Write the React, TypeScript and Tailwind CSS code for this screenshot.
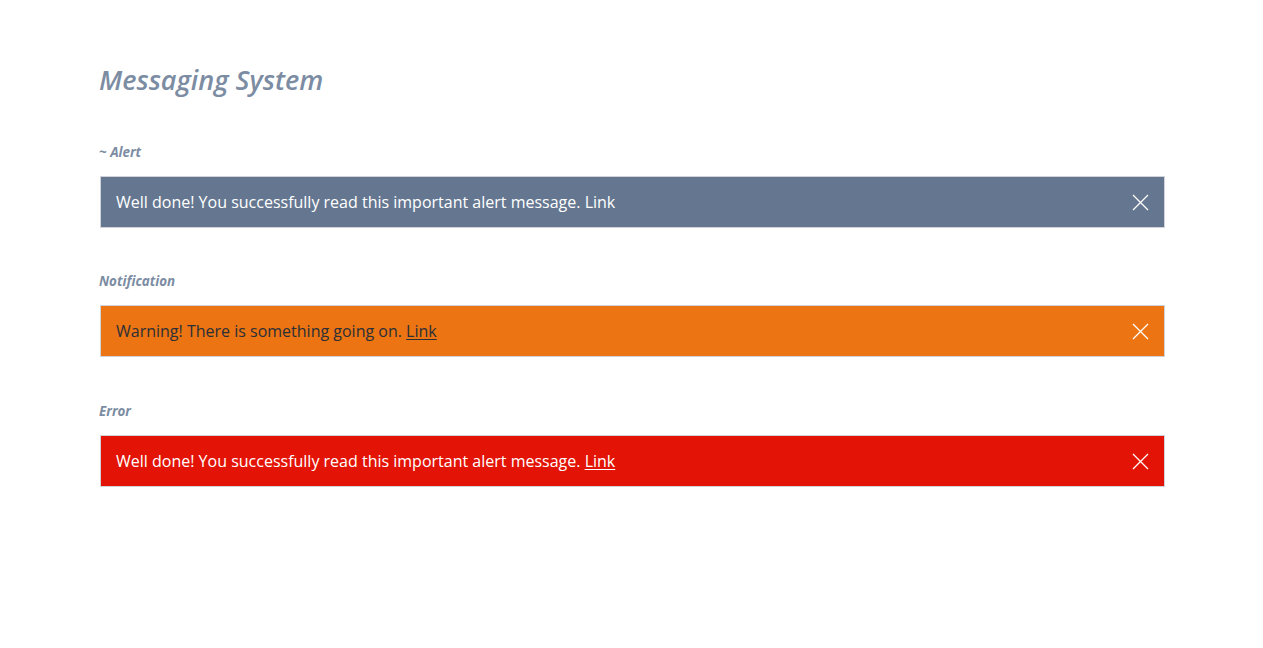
import React from "react";

type Variant = "alert" | "notification" | "error";

interface MessageBarProps {
  variant: Variant;
  text: string;
  underline?: boolean;
}

const VARIANTS: Record<Variant, string> = {
  alert: "bg-[#657790] text-white",
  notification: "bg-[#ec7412] text-[#2b2f38]",
  error: "bg-[#e31306] text-white",
};

function CloseIcon() {
  return (
    <svg width="17" height="17" viewBox="0 0 17 17" fill="none" stroke="white" strokeWidth="1.3">
      <path d="M1 1L16 16M16 1L1 16" />
    </svg>
  );
}

function MessageBar({ variant, text, underline }: MessageBarProps) {
  return (
    <div
      className={`flex h-[52px] items-center justify-between border border-[#d0d3d8] pl-[15px] pr-3 ${VARIANTS[variant]}`}
    >
      <p className="text-[16px] leading-6">
        {text}{" "}
        <a className={underline ? "underline underline-offset-2 decoration-1" : ""}>Link</a>
      </p>
      <button className="flex h-6 w-6 items-center justify-center">
        <CloseIcon />
      </button>
    </div>
  );
}

function SectionLabel({ children }: { children: React.ReactNode }) {
  return (
    <h3 className="-ml-px text-[13.4px] leading-[18px] font-bold italic text-[#7c8ca3]">
      {children}
    </h3>
  );
}

export default function App() {
  return (
    <div
      className="min-h-screen bg-white pl-[100px] pr-[98px] pt-[63px]"
      style={{ fontFamily: '"Open Sans", "Noto Sans", sans-serif' }}
    >
      <h1 className="-ml-px text-[27px] leading-[34px] font-semibold italic text-[#7c8ca3]">
        Messaging System
      </h1>

      <div className="mt-[46px] flex flex-col">
        <SectionLabel>~ Alert</SectionLabel>
        <div className="mt-[15px]">
          <MessageBar variant="alert" text="Well done! You successfully read this important alert message." />
        </div>

        <div className="mt-[44px]">
          <SectionLabel>Notification</SectionLabel>
        </div>
        <div className="mt-[15px]">
          <MessageBar variant="notification" text="Warning! There is something going on." underline />
        </div>

        <div className="mt-[45px]">
          <SectionLabel>Error</SectionLabel>
        </div>
        <div className="mt-[15px]">
          <MessageBar variant="error" text="Well done! You successfully read this important alert message." underline />
        </div>
      </div>
    </div>
  );
}
